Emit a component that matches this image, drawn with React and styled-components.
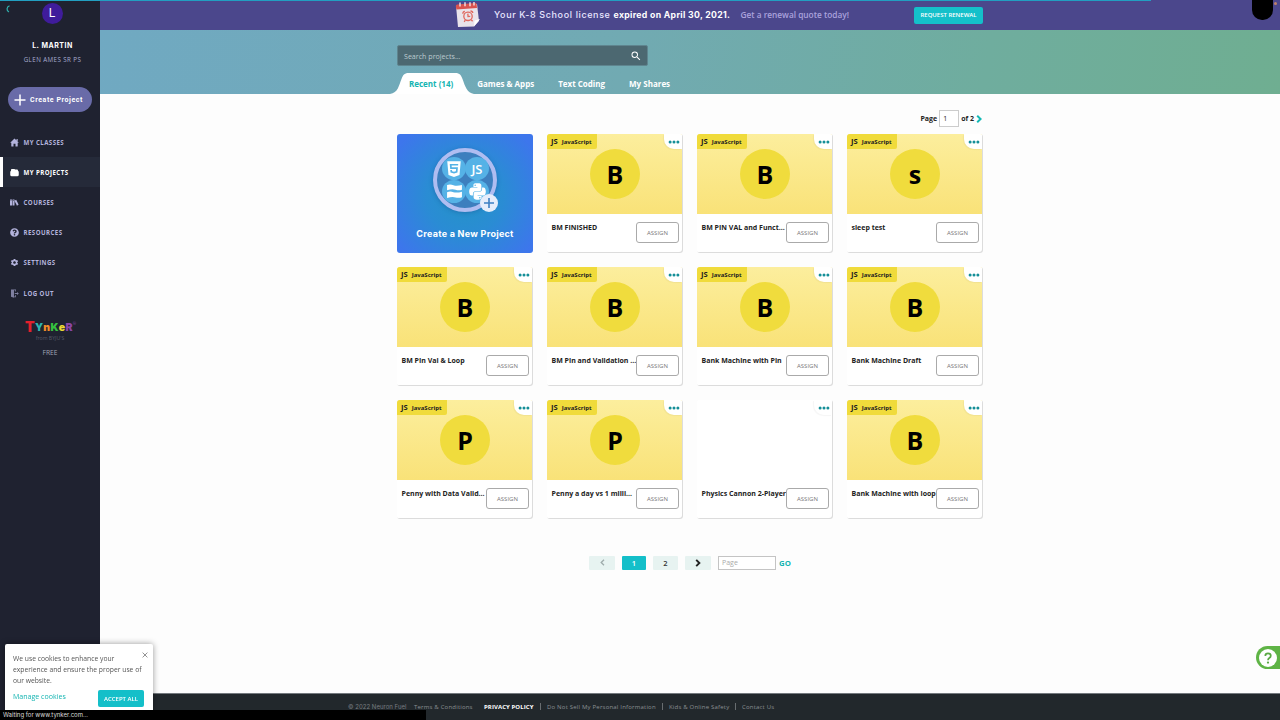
import React, { useState } from 'react';
import styled, { createGlobalStyle } from 'styled-components';
import { FaHtml5, FaPython, FaQuestionCircle } from 'react-icons/fa';
import { ImBooks } from 'react-icons/im';
import { MdSearch, MdSettings } from 'react-icons/md';

const projects = [
  { name: 'BM FINISHED', letter: 'B' },
  { name: 'BM PIN VAL and Funct...', letter: 'B' },
  { name: 'sleep test', letter: 's' },
  { name: 'BM PIn Val & Loop', letter: 'B' },
  { name: 'BM Pin and Validation ...', letter: 'B' },
  { name: 'Bank Machine with Pin', letter: 'B' },
  { name: 'Bank Machine Draft', letter: 'B' },
  { name: 'Penny with Data Valid...', letter: 'P' },
  { name: 'Penny a day vs 1 milli...', letter: 'P' },
  { name: 'Physics Cannon 2-Player', letter: '' },
  { name: 'Bank Machine with loop', letter: 'B' },
];

const HomeIcon = () => (
  <svg viewBox="0 0 18 18">
    <path d="M9 1 L17.6 9.4 H15.4 V16 Q15.4 17 14.4 17 H11 V11.5 H7 V17 H3.6 Q2.6 17 2.6 16 V9.4 H0.4 Z M13 2 h2.4 v5 l-2.4 -2z" />
  </svg>
);

const FolderIcon = () => (
  <svg viewBox="0 0 18 18">
    <rect x="2" y="2" width="8" height="8" rx="2" />
    <rect x="2" y="3" width="14" height="9" rx="2" />
    <rect x=".5" y="5" width="17" height="11.5" rx="3" />
  </svg>
);

const LogoutIcon = () => (
  <svg viewBox="0 0 18 18">
    <path d="M2 1 H12 V5 H10.6 V2.6 H8 V15 H10.6 V12 H12 V16.4 H8 V17.6 L2 15.6Z" />
    <path d="M9.5 8 H14 V5.8 L17.6 9 L14 12.2 V10 H9.5Z" />
  </svg>
);

const CalendarIcon = () => (
  <svg width="26" height="26" viewBox="0 0 26 26">
    <path d="M1 4 L22 2 L24 19 L19 24.500 L3 25Z" fill="#e9e3ea" />
    <path d="M0.8 4 Q.8 2.6 2.2 2.4 L20 .9 Q21.5 .8 21.6 2 L22 6 L1.4 7.400Z" fill="#d9534f" />
    <path d="M19.500 18.500 L25 17 L19 24.500Z" fill="#fff" />
    <path d="M5 .6 v4 M10 .3 v4 M15 .2 v4 M19 0 v3.6" stroke="#f6e4e6" strokeWidth="1.4" />
    <g transform="rotate(-4 13 14)" fill="none" stroke="#e0695f" strokeWidth="1.3">
      <circle cx="13" cy="14.3" r="4.2" />
      <path d="M13 11.6 v3 h2.2 M8 11.4 q0 -2 2.2 -2.2 M18 11.4 q0 -2 -2.2 -2.2 M10 18 l-1.2 1.6 M16 18 l1.2 1.6" />
    </g>
  </svg>
);

const BlocksIcon = () => (
  <svg width="17" height="15" viewBox="0 0 16 14" fill="#fff">
    <path d="M1 .8 Q4 -.2 7 1 T15 .8 V5.4 Q12 6.4 9 5.4 T1 5.8Z" />
    <path d="M1 7.600 Q4 6.600 7 7.600 T15 7.200 V12.4 Q12 13.4 9 12.6 T1 13Z" />
  </svg>
);

const DotsIcon = () => (
  <svg width="12" height="4" viewBox="0 0 12 4" fill="#158f98">
    <circle cx="2.100" cy="2" r="1.500" />
    <circle cx="6" cy="2" r="1.500" />
    <circle cx="9.900" cy="2" r="1.500" />
  </svg>
);

const navItems = [
  { label: 'MY CLASSES', icon: <HomeIcon /> },
  { label: 'MY PROJECTS', icon: <FolderIcon /> },
  { label: 'COURSES', icon: <ImBooks /> },
  { label: 'RESOURCES', icon: <FaQuestionCircle /> },
  { label: 'SETTINGS', icon: <MdSettings /> },
  { label: 'LOG OUT', icon: <LogoutIcon />, dim: true },
];

const logoLetters = [
  ['T', '#e3202c'],
  ['Y', '#2db5b0'],
  ['n', '#f28c28'],
  ['K', '#35c03f'],
  ['e', '#e8d832'],
  ['R', '#8a45a8'],
];

function ProjectCard({ project }) {
  return (
    <Card>
      <Thumb $blank={!project.letter}>
        {project.letter && (
          <>
            <LangTag><b>JS</b>JavaScript</LangTag>
            <Letter>{project.letter}</Letter>
          </>
        )}
        <MoreButton><DotsIcon /></MoreButton>
      </Thumb>
      <CardFooter>
        <CardTitle>{project.name}</CardTitle>
        <AssignButton>ASSIGN</AssignButton>
      </CardFooter>
    </Card>
  );
}

function App() {
  const [activeTab, setActiveTab] = useState('Recent (14)');
  const [page, setPage] = useState('1');

  return (
    <Page>
      <GlobalStyle />
      <Sidebar>
        <Avatar>L</Avatar>
        <UserName>L. MARTIN</UserName>
        <School>GLEN AMES SR PS</School>
        <CreateButton>
          <svg width="12" height="12" viewBox="0 0 12 12"><path d="M6 .5v11M.5 6h11" stroke="#fff" strokeWidth="1.5" /></svg>
          Create Project
        </CreateButton>
        <Nav>
          {navItems.map((item) => (
            <NavItem key={item.label} $active={item.label === 'MY PROJECTS'} $dim={item.dim}>
              {item.icon}
              <span>{item.label}</span>
            </NavItem>
          ))}
        </Nav>
        <Logo>
          {logoLetters.map(([letter, color]) => (
            <LogoLetter key={letter} $color={color} $big={letter === 'T'}>{letter}</LogoLetter>
          ))}
          <sup>®</sup>
        </Logo>
        <LogoSub>from BYJU'S</LogoSub>
        <Plan>FREE</Plan>
      </Sidebar>

      <Main>
        <Banner>
          <CalendarIcon />
          <BannerText>Your K-8 School license <b>expired on April 30, 2021.</b></BannerText>
          <BannerLink>Get a renewal quote today!</BannerLink>
          <RenewButton>REQUEST RENEWAL</RenewButton>
        </Banner>

        <Header>
          <Search>
            <span>Search projects...</span>
            <MdSearch />
          </Search>
          <Tabs>
            {['Recent (14)', 'Games & Apps', 'Text Coding', 'My Shares'].map((tab) => (
              <Tab key={tab} $active={tab === activeTab} onClick={() => setActiveTab(tab)}>
                {tab === activeTab && (
                  <svg viewBox="0 0 84 21" preserveAspectRatio="none">
                    <path d="M0 21 C8 20 9 12 11.500 6 C13 1.500 15 0 19 0 H65 C69 0 71 1.500 72.500 6 C75 13 77 20 84 21Z" fill="#fff" />
                  </svg>
                )}
                <span>{tab}</span>
              </Tab>
            ))}
          </Tabs>
        </Header>

        <Content>
          <TopPager>
            Page
            <PageInput value={page} onChange={(e) => setPage(e.target.value)} />
            of 2
            <svg width="6" height="8" viewBox="0 0 6 8"><path d="M1.200 .8 L4.600 4 L1.200 7.200" fill="none" stroke="#13b9b5" strokeWidth="2" /></svg>
          </TopPager>

          <Grid>
            <NewProject>
              <Ring>
                <Bubble><FaHtml5 size={18} /></Bubble>
                <Bubble>JS</Bubble>
                <Bubble><BlocksIcon /></Bubble>
                <Bubble><FaPython size={19} /></Bubble>
                <PlusBadge>
                  <svg width="12" height="12" viewBox="0 0 12 12"><path d="M6 1v10M1 6h10" stroke="#3c7fc4" strokeWidth="1.600" /></svg>
                </PlusBadge>
              </Ring>
              <NewLabel>Create a New Project</NewLabel>
            </NewProject>
            {projects.map((project) => (
              <ProjectCard key={project.name} project={project} />
            ))}
          </Grid>

          <Pagination>
            <PageButton $w={26} $disabled>
              <svg width="5" height="7" viewBox="0 0 5 7"><path d="M4 .7 L1.200 3.500 L4 6.300" fill="none" stroke="#9eabab" strokeWidth="1.300" /></svg>
            </PageButton>
            <PageButton $w={24} $active>1</PageButton>
            <PageButton $w={25}>2</PageButton>
            <PageButton $w={26}>
              <svg width="6" height="8" viewBox="0 0 6 8"><path d="M1.200 .8 L4.400 4 L1.200 7.200" fill="none" stroke="#222" strokeWidth="1.900" /></svg>
            </PageButton>
            <JumpInput placeholder="Page" />
            <Go>GO</Go>
          </Pagination>
        </Content>

        <Footer>
          <Copyright>© 2022 Neuron Fuel</Copyright>
          <Terms>Terms &amp; Conditions</Terms>
          <Privacy>PRIVACY POLICY</Privacy>
          <i />
          <FooterLink $w={109}>Do Not Sell My Personal Information</FooterLink>
          <i />
          <FooterLink $w={60}>Kids &amp; Online Safety</FooterLink>
          <i />
          <FooterLink $w={34}>Contact Us</FooterLink>
        </Footer>
      </Main>

      <CookieBox>
        <CloseButton viewBox="0 0 6 6"><path d="M.6 .6 L5.400 5.400 M5.400 .6 L.6 5.400" stroke="#777" strokeWidth=".8" /></CloseButton>
        <p>We use cookies to enhance your<br />experience and ensure the proper use of<br />our website.</p>
        <CookieActions>
          <a>Manage cookies</a>
          <AcceptButton>ACCEPT ALL</AcceptButton>
        </CookieActions>
      </CookieBox>

      <StatusBar>Waiting for www.tynker.com...</StatusBar>
      <LoadBar />
      <Spinner viewBox="0 0 8 8"><path d="M5.500 .8 A3.300 3.300 0 0 0 5 7" fill="none" stroke="#2fb0ae" strokeWidth="1.200" /></Spinner>
      <Notch />
      <RecordDot />
      <HelpButton>
        <svg width="18" height="18" viewBox="0 0 18 18">
          <circle cx="9" cy="9" r="9" fill="#fff" />
          <path d="M6.300 7 Q6.300 4.300 9 4.300 Q11.800 4.300 11.800 6.700 Q11.800 8 10.300 9 Q9 9.900 9 11.200" fill="none" stroke="#5aa944" strokeWidth="1.700" />
          <circle cx="9" cy="13.600" r="1.150" fill="#5aa944" />
        </svg>
      </HelpButton>
    </Page>
  );
}

const GlobalStyle = createGlobalStyle`
  * { box-sizing: border-box; }
  body {
    margin: 0;
    overflow: hidden;
    background: #fdfdfd;
    font-family: "Open Sans", "Noto Sans", sans-serif;
  }
  button, input { font-family: inherit; }
  p { margin: 0; }
`;

const Page = styled.div`
  display: flex;
  width: 1280px;
  height: 720px;
  overflow: hidden;
`;

const Sidebar = styled.aside`
  display: flex;
  flex-direction: column;
  align-items: center;
  width: 100px;
  flex: none;
  background: #1f2230;
`;

const Avatar = styled.div`
  width: 21px;
  height: 21px;
  margin: 3px 0 0 4px;
  border-radius: 50%;
  background: #3f1c9b;
  color: #fff;
  font: 12px/21px Roboto, sans-serif;
  text-align: center;
`;

const UserName = styled.div`
  margin: 16px 0 0 5px;
  color: #fff;
  font: 700 7px/11px Inter, sans-serif;
  letter-spacing: 0.52px;
`;

const School = styled.div`
  margin: 4px 0 0 5px;
  color: #a9add2;
  font-size: 6.2px;
  line-height: 10px;
  letter-spacing: 0.42px;
  white-space: nowrap;
`;

const CreateButton = styled.button`
  display: flex;
  align-items: center;
  gap: 4px;
  width: 84px;
  height: 25px;
  margin: 22px 0 0;
  padding: 1px 0 0 6px;
  border: 0;
  border-radius: 13px;
  background: #696ba8;
  color: #fff;
  font: 700 7px Roboto, sans-serif;
  letter-spacing: 0.57px;
  white-space: nowrap;
`;

const Nav = styled.nav`
  width: 100%;
  margin-top: 15px;
`;

const NavItem = styled.div`
  display: flex;
  align-items: center;
  gap: 4.5px;
  height: 30px;
  padding-left: ${(p) => (p.$active ? 7 : 10)}px;
  border-left: ${(p) => (p.$active ? '3px solid #fff' : '0')};
  background: ${(p) => (p.$active ? '#252a39' : 'transparent')};
  color: ${(p) => (p.$active ? '#fff' : '#b3b3dc')};
  font-size: 6.1px;
  font-weight: 700;
  letter-spacing: 0.45px;
  white-space: nowrap;

  &:last-child { height: 32px; }

  svg {
    width: 9px;
    height: 9px;
    fill: currentColor;
    opacity: ${(p) => (p.$dim ? 0.65 : 1)};
  }
`;

const Logo = styled.div`
  display: flex;
  align-items: flex-end;
  height: 15px;
  margin: 10px 0 0 1px;

  sup {
    align-self: flex-start;
    color: #8a45a8;
    font-size: 4px;
    line-height: 10px;
  }
`;

const LogoLetter = styled.span`
  margin-right: 0.3px;
  color: ${(p) => p.$color};
  font: 900 ${(p) => (p.$big ? 14 : 10.5)}px/${(p) => (p.$big ? 15 : 12)}px Inter, sans-serif;
`;

const LogoSub = styled.div`
  margin-top: 1px;
  color: #565968;
  font-size: 5.2px;
  line-height: 7px;
  white-space: nowrap;
`;

const Plan = styled.div`
  margin-top: 5px;
  color: #a2a5b5;
  font-size: 6.6px;
  line-height: 11px;
`;

const Main = styled.main`
  display: flex;
  flex-direction: column;
  flex: 1;
  min-width: 0;
`;

const Banner = styled.div`
  display: flex;
  align-items: center;
  height: 30px;
  padding-left: 355px;
  background: #4b478c;
  white-space: nowrap;
  font-family: Inter, sans-serif;
`;

const BannerText = styled.div`
  width: 236px;
  margin-left: 13px;
  padding-bottom: 2px;
  color: #e9e6ff;
  font-size: 9px;
  font-weight: 500;
  letter-spacing: 0.62px;

  b {
    color: #fff;
    font-size: 8.7px;
    font-weight: 700;
    letter-spacing: 0.32px;
  }
`;

const BannerLink = styled.div`
  width: 109px;
  margin-left: 10.5px;
  padding-bottom: 2px;
  color: #aaa2dc;
  font: 600 8.3px "Open Sans", sans-serif;
`;

const RenewButton = styled.button`
  width: 69px;
  height: 17px;
  margin-left: 64.5px;
  padding: 0;
  border: 0;
  border-radius: 2px;
  background: #14c0ca;
  color: #fff;
  font: 600 6px "Open Sans", sans-serif;
`;

const Header = styled.header`
  display: flex;
  flex-direction: column;
  justify-content: space-between;
  height: 64px;
  padding: 15px 0 0 297px;
  background: linear-gradient(100deg, #70a9c2 0%, #71aab2 45%, #6fad9e 75%, #6fae91 100%);
`;

const Search = styled.div`
  display: flex;
  align-items: center;
  justify-content: space-between;
  width: 251px;
  height: 21px;
  padding: 0 5px 0 6px;
  border: 1px solid #5f858f;
  border-radius: 2px;
  background: #4c6871;
  color: #bccbd0;
  font-size: 7.1px;

  svg { width: 12px; height: 12px; color: #fff; }
`;

const Tabs = styled.div`
  display: flex;
  height: 21px;
`;

const Tab = styled.div`
  position: relative;
  padding: 0 12px;
  color: ${(p) => (p.$active ? '#15b5b2' : '#fff')};
  font-size: 8px;
  font-weight: 700;
  line-height: 21px;
  white-space: nowrap;
  cursor: pointer;

  span { position: relative; }

  svg {
    position: absolute;
    left: -7px;
    bottom: 0;
    width: 84px;
    height: 21px;
  }
`;

const Content = styled.section`
  flex: 1;
  padding: 16px 0 0 297px;
`;

const TopPager = styled.div`
  display: flex;
  align-items: center;
  justify-content: flex-end;
  gap: 2px;
  width: 586px;
  height: 17px;
  padding-right: 1px;
  color: #222;
  font-size: 7px;
  font-weight: 700;
`;

const PageInput = styled.input`
  width: 20px;
  height: 17px;
  padding: 0 3px;
  border: 1px solid #ccc;
  background: #fff;
  color: #222;
  font-size: 7px;
`;

const Grid = styled.div`
  display: grid;
  grid-template-columns: repeat(4, 136px);
  grid-auto-rows: 119px;
  gap: 14px;
  margin-top: 7px;
`;

const NewProject = styled.div`
  display: flex;
  flex-direction: column;
  align-items: center;
  width: 136px;
  padding-top: 14px;
  border-radius: 3px;
  background: radial-gradient(circle at 50% 52%, #2494c6 0%, #2a8cd4 42%, #3d76ec 90%);
`;

const Ring = styled.div`
  position: relative;
  display: grid;
  grid-template-columns: 23px 23px;
  place-content: center;
  width: 64px;
  height: 64px;
  border: 4px solid #afbdf1;
  border-radius: 50%;
  background: #3d7fbe;
  box-shadow: 0 1px 4px rgba(20, 60, 130, 0.35);
`;

const Bubble = styled.div`
  display: flex;
  align-items: center;
  justify-content: center;
  width: 24px;
  height: 23px;
  border-radius: 50%;
  background: #55b2e6;
  color: #fff;
  font-size: 13px;
  font-weight: 600;
`;

const PlusBadge = styled.div`
  position: absolute;
  right: -5px;
  bottom: -4px;
  display: flex;
  align-items: center;
  justify-content: center;
  width: 18px;
  height: 18px;
  border-radius: 50%;
  background: #e5edfb;
`;

const NewLabel = styled.div`
  margin-top: 14px;
  color: #fff;
  font: 700 9px/15px Inter, sans-serif;
  letter-spacing: 0.27px;
  white-space: nowrap;
`;

const Card = styled.article`
  width: 136px;
  overflow: hidden;
  border-radius: 3px;
  background: #fff;
  box-shadow: inset -1px -1px 0 #dcdcdc;
`;

const Thumb = styled.div`
  position: relative;
  display: flex;
  justify-content: center;
  width: 135px;
  height: 80px;
  padding: 15px 0 0 1px;
  background: ${(p) => (p.$blank ? '#fff' : 'linear-gradient(#fcee9d, #f9e278)')};
`;

const LangTag = styled.div`
  position: absolute;
  left: 0;
  top: 0;
  display: flex;
  align-items: center;
  gap: 4px;
  width: 50px;
  height: 15px;
  padding-left: 4px;
  background: #f0db3b;
  color: #222;
  font-size: 6px;
  font-weight: 700;
  border-bottom-right-radius: 2px;

  b {
    font-size: 7.6px;
    font-weight: 700;
    line-height: 13px;
    padding-bottom: 1px;
  }
`;

const Letter = styled.div`
  width: 50px;
  height: 50px;
  border-radius: 50%;
  background: #f0dc3d;
  color: #000;
  font-size: 25px;
  font-weight: 700;
  line-height: 51px;
  text-align: center;
`;

const MoreButton = styled.div`
  position: absolute;
  right: 0;
  top: 0;
  display: flex;
  align-items: center;
  justify-content: center;
  width: 18px;
  height: 15px;
  padding: 1px 0 0 2px;
  border-bottom-left-radius: 10px;
  background: #fff;
  box-shadow: -1px 1px 1px rgba(0, 0, 0, 0.04);
`;

const CardFooter = styled.div`
  display: flex;
  justify-content: space-between;
  padding: 8px 4px 0 4.5px;
`;

const CardTitle = styled.div`
  flex: 1;
  min-width: 0;
  padding-top: 1px;
  color: #222;
  font-size: 7px;
  font-weight: 700;
  line-height: 10px;
  white-space: nowrap;
`;

const AssignButton = styled.button`
  width: 43px;
  height: 21px;
  padding: 0;
  flex: none;
  border: 1px solid #aaa;
  border-radius: 3px;
  background: #fff;
  color: #777;
  font-size: 6px;
`;

const Pagination = styled.div`
  display: flex;
  align-items: center;
  gap: 7px;
  height: 15px;
  margin: 36px 0 0 192px;
`;

const PageButton = styled.button`
  display: flex;
  align-items: center;
  justify-content: center;
  width: ${(p) => p.$w}px;
  height: 14px;
  padding: 0;
  border: 0;
  border-radius: 1px;
  background: ${(p) => (p.$active ? '#14bfc9' : '#e7f3f1')};
  color: ${(p) => (p.$active ? '#fff' : '#333')};
  font-size: 7.5px;
  font-weight: 600;
`;

const JumpInput = styled.input`
  width: 58px;
  height: 14px;
  padding: 0 3px;
  border: 1px solid #c4c4c4;
  background: #fff;
  font-size: 7px;

  &::placeholder { color: #aaa; }
`;

const Go = styled.span`
  margin-left: -4px;
  color: #15b5b2;
  font-size: 7.8px;
  font-weight: 700;
`;

const Footer = styled.footer`
  display: flex;
  align-items: center;
  height: 27px;
  padding: 0 0 1px 248px;
  border-top: 1px solid #74797e;
  background: #22282c;
  color: #8b9093;
  font-size: 6px;
  white-space: nowrap;

  i {
    width: 1px;
    height: 7px;
    margin: 0 6px;
    background: #686d70;
  }
`;

const Copyright = styled.div`
  width: 66px;
  color: #777c80;
  font-family: Inter, sans-serif;
  letter-spacing: 0.03px;
`;

const Terms = styled.div`
  width: 70px;
  letter-spacing: 0.2px;
`;

const Privacy = styled.div`
  width: 50px;
  color: #fff;
  font-weight: 700;
  letter-spacing: 0.08px;
`;

const FooterLink = styled.div`
  width: ${(p) => p.$w}px;
  letter-spacing: 0.2px;
`;

const CookieBox = styled.div`
  position: fixed;
  left: 5px;
  top: 644px;
  width: 148px;
  height: 70px;
  padding: 9px 9px 0 8px;
  border-radius: 2px;
  background: #fff;
  box-shadow: 0 0 6px rgba(0, 0, 0, 0.4);
  color: #555;
  font-size: 6.76px;
  line-height: 11px;
  white-space: nowrap;
`;

const CloseButton = styled.svg`
  position: absolute;
  right: 5px;
  top: 8px;
  width: 6px;
  height: 6px;
`;

const CookieActions = styled.div`
  display: flex;
  justify-content: space-between;
  margin-top: 5px;

  a { color: #15b5b2; font-size: 7.05px; }
`;

const AcceptButton = styled.button`
  width: 46px;
  height: 17px;
  margin-top: -1px;
  padding: 0;
  border: 0;
  border-radius: 2px;
  background: #14bfc9;
  color: #fff;
  font-size: 6px;
  font-weight: 600;
`;

const StatusBar = styled.div`
  position: fixed;
  left: 0;
  bottom: 0;
  width: 426px;
  height: 10px;
  padding-left: 3px;
  background: #000;
  color: #ddd;
  font: 6px/10px Inter, sans-serif;
`;

const LoadBar = styled.div`
  position: fixed;
  left: 0;
  top: 0;
  width: 1151px;
  height: 1px;
  background: #229fc1;
`;

const Spinner = styled.svg`
  position: fixed;
  left: 4px;
  top: 5px;
  width: 8px;
  height: 8px;
`;

const Notch = styled.div`
  position: fixed;
  right: 7px;
  top: 0;
  width: 21px;
  height: 20px;
  border-radius: 0 0 10px 10px;
  background: #000;
`;

const RecordDot = styled.div`
  position: fixed;
  right: 3px;
  top: 2px;
  width: 3px;
  height: 3px;
  border-radius: 50%;
  background: #c08268;
`;

const HelpButton = styled.div`
  position: fixed;
  right: 0;
  top: 646px;
  display: flex;
  align-items: center;
  width: 24px;
  height: 23px;
  padding-left: 3px;
  border-radius: 12px 0 0 12px;
  background: #5fb446;
`;

export default App;
